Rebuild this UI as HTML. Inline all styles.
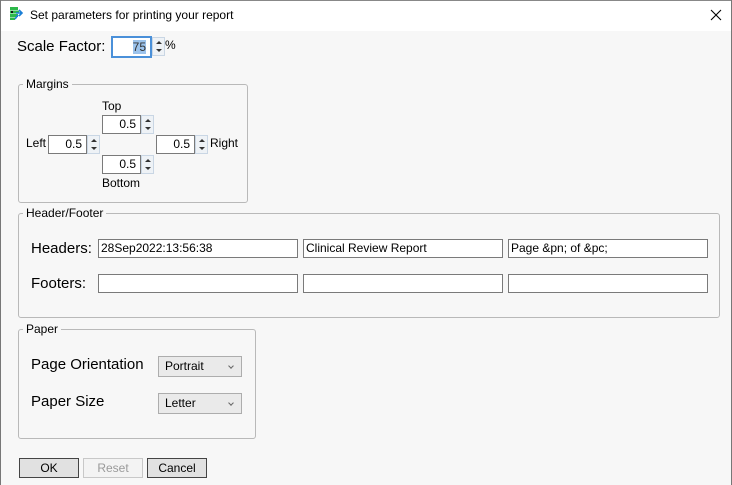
<!DOCTYPE html>
<html><head><meta charset="utf-8"><style>
*{box-sizing:border-box;margin:0;padding:0}
body{width:732px;height:485px;overflow:hidden;background:#f7f7f7;font-family:"Liberation Sans","DejaVu Sans",sans-serif;color:#000;position:relative}
.a{position:absolute;white-space:nowrap}
.title{left:0;top:0;width:732px;height:31px;background:#fff;border-top:1px solid #888}
.frame{left:0;top:0;width:732px;height:485px;border-left:1px solid #777;border-right:1px solid #777}
.inp{position:absolute;background:#fff;border:1px solid #7a7a7a;font-size:12px;height:19px;line-height:17px}
.num{text-align:right;padding-right:4px}
.spin{position:absolute;width:13px;height:19px;border:1px solid #c9d6e4;background:#eef2f6}
.spin:before,.spin:after{content:"";position:absolute;left:3px;border-left:3px solid transparent;border-right:3px solid transparent}
.spin:before{top:3px;border-bottom:3px solid #333}
.spin:after{bottom:3px;border-top:3px solid #333}
.box{position:absolute;border:1px solid #b9b9b9;border-radius:3px}
.lg{position:absolute;background:#f7f7f7;font-size:12px;padding:0 3px;line-height:14px}
.sel{position:absolute;background:#eaeaea;border:1px solid #adadad;font-size:12px;padding-left:6px;line-height:19px;height:21px}
.sel:after{content:"";position:absolute;right:8px;top:7px;width:3px;height:3px;border-right:1px solid #666;border-bottom:1px solid #666;transform:rotate(45deg)}
.btn{position:absolute;top:458px;height:20px;width:60px;background:#e1e1e1;border:1px solid #444;font-size:12px;text-align:center;line-height:18px}
</style></head><body>
<div class="a title"></div>
<div class="a frame"></div>
<svg class="a" style="left:10px;top:7px" width="14" height="13" viewBox="0 0 14 13"><rect x="0" y="0" width="8" height="3" fill="#2db84a"/><rect x="0" y="3.5" width="9" height="3" fill="#2db84a"/><rect x="0" y="7" width="8" height="3" fill="#2db84a"/><rect x="0" y="10.5" width="5" height="2.5" fill="#2db84a"/><rect x="1" y="4" width="2" height="2" fill="#111"/><path d="M6 6 L12 6 M9 3 L12 6 L9 9 M8 8 L5 12" stroke="#1c7fd6" stroke-width="1.6" fill="none"/></svg>
<div class="a" style="left:30px;top:8px;font-size:12px">Set parameters for printing your report</div>
<svg class="a" style="left:710px;top:9px" width="12" height="12"><path d="M1 1L11 11M11 1L1 11" stroke="#000" stroke-width="1.1"/></svg>

<div class="a" style="left:17px;top:38px;font-size:15px">Scale Factor:</div>
<div class="inp num" style="left:111px;top:36px;width:41px;height:22px;border:2px solid #4a90d9;line-height:18px"><span style="background:#9cc3ec;color:#333">75</span></div>
<div class="spin" style="left:152px;top:37px;height:19px"></div>
<div class="a" style="left:165px;top:38px;font-size:12px">%</div>

<div class="box" style="left:18px;top:84px;width:230px;height:119px"></div>
<div class="lg" style="left:23px;top:77px">Margins</div>
<div class="a" style="left:102px;top:99px;font-size:12px">Top</div>
<div class="inp num" style="left:102px;top:115px;width:39px">0.5</div><div class="spin" style="left:141px;top:115px"></div>
<div class="a" style="left:26px;top:136px;font-size:12px">Left</div>
<div class="inp num" style="left:48px;top:135px;width:39px">0.5</div><div class="spin" style="left:87px;top:135px"></div>
<div class="inp num" style="left:156px;top:135px;width:39px">0.5</div><div class="spin" style="left:195px;top:135px"></div>
<div class="a" style="left:210px;top:136px;font-size:12px">Right</div>
<div class="inp num" style="left:102px;top:155px;width:39px">0.5</div><div class="spin" style="left:141px;top:155px"></div>
<div class="a" style="left:102px;top:176px;font-size:12px">Bottom</div>

<div class="box" style="left:18px;top:213px;width:702px;height:105px"></div>
<div class="lg" style="left:23px;top:206px">Header/Footer</div>
<div class="a" style="left:31px;top:240px;font-size:15px">Headers:</div>
<div class="inp" style="left:98px;top:239px;width:200px;padding-left:2px">28Sep2022:13:56:38</div>
<div class="inp" style="left:303px;top:239px;width:200px;padding-left:2px">Clinical Review Report</div>
<div class="inp" style="left:508px;top:239px;width:200px;padding-left:2px">Page &amp;pn; of &amp;pc;</div>
<div class="a" style="left:31px;top:275px;font-size:15px">Footers:</div>
<div class="inp" style="left:98px;top:274px;width:200px"></div>
<div class="inp" style="left:303px;top:274px;width:200px"></div>
<div class="inp" style="left:508px;top:274px;width:200px"></div>

<div class="box" style="left:18px;top:329px;width:238px;height:110px"></div>
<div class="lg" style="left:23px;top:322px">Paper</div>
<div class="a" style="left:31px;top:356px;font-size:15px">Page Orientation</div>
<div class="sel" style="left:158px;top:356px;width:84px">Portrait</div>
<div class="a" style="left:31px;top:393px;font-size:15px">Paper Size</div>
<div class="sel" style="left:158px;top:393px;width:84px">Letter</div>

<div class="btn" style="left:19px">OK</div>
<div class="btn" style="left:83px;background:#f3f3f3;border-color:#c8c8c8;color:#9a9a9a">Reset</div>
<div class="btn" style="left:147px">Cancel</div>
</body></html>
